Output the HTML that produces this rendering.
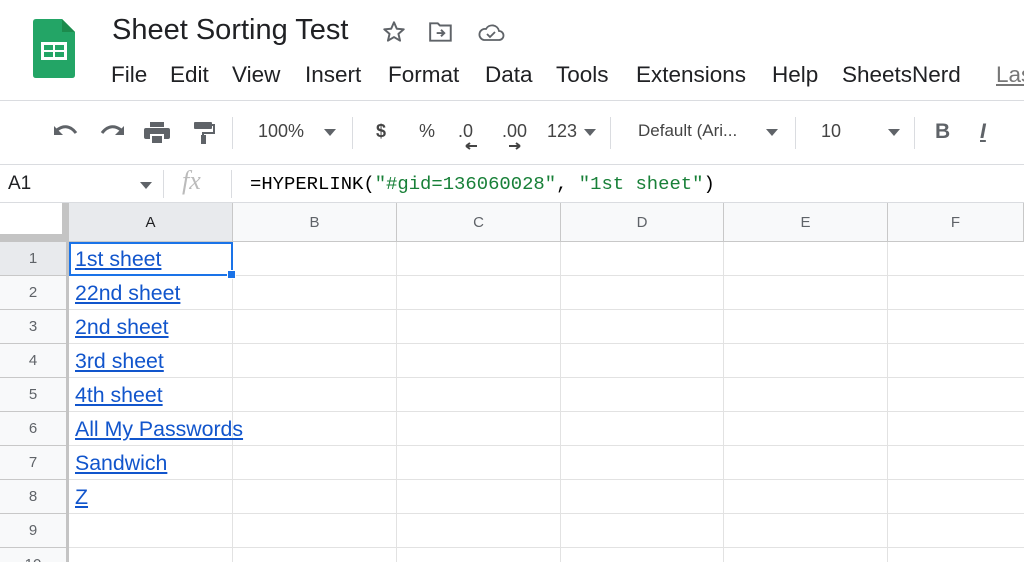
<!DOCTYPE html>
<html><head><meta charset="utf-8"><style>
*{margin:0;padding:0;box-sizing:border-box}
html,body{width:1024px;height:562px;overflow:hidden}
body{background:#fff;font-family:"Liberation Sans",Arial,sans-serif;position:relative;color:#202124}
.a{position:absolute}
.menu span{position:absolute;top:62px;font-size:22.5px;color:#202124}
.tb{color:#5f6368;font-size:18px;position:absolute;top:121px}
.sep{position:absolute;top:117px;width:1px;height:32px;background:#dadce0}
.col{position:absolute;top:203px;height:39px;border-right:1px solid #c8c8c8;border-bottom:1px solid #c8c8c8;background:#f8f9fa;text-align:center;line-height:39px;font-size:15px;color:#5f6368}
.rh{position:absolute;left:0;width:66px;height:34px;border-bottom:1px solid #c8c8c8;background:#f8f9fa;text-align:center;line-height:34px;font-size:15px;color:#5f6368}
.hl{position:absolute;height:1px;background:#e2e2e2;left:69px;right:0}
.vl{position:absolute;width:1px;background:#e2e2e2;top:242px;height:320px}
.lk{position:absolute;left:75px;font-size:21.3px;color:#1155cc;text-decoration:underline;white-space:nowrap}
</style></head><body>
<svg class="a" style="left:32px;top:19px" width="44" height="60" viewBox="0 0 44 60">
<path d="M4 0H30L43 13V56Q43 59 40 59H4Q1 59 1 56V3Q1 0 4 0Z" fill="#23a566"/>
<path d="M30 0V13H43Z" fill="#1c8b4d"/>
<rect x="9" y="23" width="26" height="18" fill="#fff"/>
<rect x="12" y="26" width="9" height="5" fill="#23a566"/><rect x="23" y="26" width="9" height="5" fill="#23a566"/>
<rect x="12" y="33" width="9" height="5" fill="#23a566"/><rect x="23" y="33" width="9" height="5" fill="#23a566"/>
</svg>
<div class="a" style="left:112px;top:14px;font-size:29px;color:#202124">Sheet Sorting Test</div>
<svg class="a" style="left:381px;top:19px" width="26" height="26" viewBox="0 0 24 24"><path d="M12 3l2.6 6 6.4.5-4.9 4.2 1.5 6.3L12 16.7 6.4 20l1.5-6.3L3 9.5 9.4 9Z" fill="none" stroke="#5f6368" stroke-width="1.8" stroke-linejoin="round"/></svg>
<svg class="a" style="left:428px;top:20px" width="26" height="24" viewBox="0 0 24 22"><path d="M2 3h7l2 2h10v14H2Z" fill="none" stroke="#5f6368" stroke-width="1.8"/><path d="M8 12h7M12 9l3 3-3 3" fill="none" stroke="#5f6368" stroke-width="1.8"/></svg>
<svg class="a" style="left:477px;top:22px" width="28" height="22" viewBox="0 0 28 22"><path d="M7 18h15a4.5 4.5 0 0 0 0-9 7 7 0 0 0-13-2A5.5 5.5 0 0 0 7 18Z" fill="none" stroke="#5f6368" stroke-width="1.8"/><path d="M10 12l3 3 5-5" fill="none" stroke="#5f6368" stroke-width="1.8"/></svg>
<div class="menu">
<span style="left:111px">File</span><span style="left:170px">Edit</span><span style="left:232px">View</span><span style="left:305px">Insert</span><span style="left:388px">Format</span><span style="left:485px">Data</span><span style="left:556px">Tools</span><span style="left:636px">Extensions</span><span style="left:772px">Help</span><span style="left:842px">SheetsNerd</span><span style="left:996px;color:#777;text-decoration:underline">Las</span>
</div>
<div class="a" style="left:0;top:100px;width:1024px;height:1px;background:#dadce0"></div>
<svg class="a" style="left:52px;top:122px" width="28" height="20" viewBox="0 0 28 20"><path d="M4 9c6-6 14-6 20 2" fill="none" stroke="#5f6368" stroke-width="3"/><path d="M2 4v9h9Z" fill="#5f6368"/></svg>
<svg class="a" style="left:98px;top:122px" width="28" height="20" viewBox="0 0 28 20"><path d="M24 9c-6-6-14-6-20 2" fill="none" stroke="#5f6368" stroke-width="3"/><path d="M26 4v9h-9Z" fill="#5f6368"/></svg>
<svg class="a" style="left:143px;top:121px" width="28" height="24" viewBox="0 0 28 24"><rect x="7" y="1" width="14" height="5" fill="#5f6368"/><rect x="1" y="7" width="26" height="11" rx="2" fill="#5f6368"/><rect x="7" y="13" width="14" height="10" fill="#fff"/><rect x="9" y="15" width="10" height="7" fill="#5f6368"/></svg>
<svg class="a" style="left:192px;top:121px" width="24" height="24" viewBox="0 0 24 24"><rect x="2" y="1" width="18" height="7" rx="1" fill="#5f6368"/><path d="M20 4h2v8H11v3" fill="none" stroke="#5f6368" stroke-width="2"/><rect x="9" y="14" width="5" height="9" fill="#5f6368"/></svg>
<div class="sep" style="left:232px"></div>
<div class="tb" style="left:258px;color:#444">100%</div>
<svg class="a" style="left:324px;top:129px" width="12" height="7"><path d="M0 0h12L6 7Z" fill="#5f6368"/></svg>
<div class="sep" style="left:352px"></div>
<div class="tb" style="left:376px;color:#444;font-weight:bold">$</div>
<div class="tb" style="left:419px;color:#444">%</div>
<div class="tb" style="left:458px;color:#444">.0</div>
<div class="tb" style="left:502px;color:#444">.00</div>
<svg class="a" style="left:464px;top:141px" width="14" height="10"><path d="M2 5h11M2 5l4-3M2 5l4 3" fill="none" stroke="#444" stroke-width="2"/></svg>
<svg class="a" style="left:508px;top:141px" width="14" height="10"><path d="M1 5h11M12 5l-4-3M12 5l-4 3" fill="none" stroke="#444" stroke-width="2"/></svg>
<div class="tb" style="left:547px;color:#444">123</div>
<svg class="a" style="left:584px;top:129px" width="12" height="7"><path d="M0 0h12L6 7Z" fill="#5f6368"/></svg>
<div class="sep" style="left:610px"></div>
<div class="tb" style="left:638px;color:#444;font-size:17px">Default (Ari...</div>
<svg class="a" style="left:766px;top:129px" width="12" height="7"><path d="M0 0h12L6 7Z" fill="#5f6368"/></svg>
<div class="sep" style="left:795px"></div>
<div class="tb" style="left:821px;color:#444">10</div>
<svg class="a" style="left:888px;top:129px" width="12" height="7"><path d="M0 0h12L6 7Z" fill="#5f6368"/></svg>
<div class="sep" style="left:914px"></div>
<div class="tb" style="left:935px;font-weight:bold;font-size:21px;top:120px">B</div>
<div class="tb" style="left:980px;font-weight:bold;font-style:italic;font-size:21px;top:120px;text-decoration:underline">I</div>
<div class="a" style="left:0;top:164px;width:1024px;height:1px;background:#dadce0"></div>
<div class="a" style="left:8px;top:173px;font-size:19px;color:#202124">A1</div>
<svg class="a" style="left:140px;top:182px" width="12" height="7"><path d="M0 0h12L6 7Z" fill="#5f6368"/></svg>
<div class="a" style="left:163px;top:170px;width:1px;height:28px;background:#dadce0"></div>
<div class="a" style="left:182px;top:166px;font-size:26px;font-style:italic;font-family:'Liberation Serif',serif;color:#bbb">fx</div>
<div class="a" style="left:231px;top:170px;width:1px;height:28px;background:#dadce0"></div>
<div class="a" style="left:250px;top:173px;font-size:18.9px;font-family:'Liberation Mono',monospace;color:#000;white-space:nowrap">=HYPERLINK(<span style="color:#188038">"#gid=136060028"</span>, <span style="color:#188038">"1st sheet"</span>)</div>
<div class="a" style="left:0;top:202px;width:1024px;height:1px;background:#dadce0"></div>
<div class="a" style="left:0;top:203px;width:69px;height:39px;background:#fff"></div>
<div class="a" style="left:62px;top:203px;width:7px;height:39px;background:#c4c4c4"></div>
<div class="a" style="left:0;top:234px;width:69px;height:8px;background:#c4c4c4"></div>
<div class="col" style="left:69px;width:164px;background:#e8eaed;color:#202124">A</div>
<div class="col" style="left:233px;width:164px">B</div>
<div class="col" style="left:397px;width:164px">C</div>
<div class="col" style="left:561px;width:163px">D</div>
<div class="col" style="left:724px;width:164px">E</div>
<div class="col" style="left:888px;width:136px">F</div>
<div class="a" style="left:66px;top:242px;width:3px;height:320px;background:#c4c4c4"></div>
<div class="rh" style="top:242px;background:#e8eaed">1</div>
<div class="rh" style="top:276px">2</div>
<div class="rh" style="top:310px">3</div>
<div class="rh" style="top:344px">4</div>
<div class="rh" style="top:378px">5</div>
<div class="rh" style="top:412px">6</div>
<div class="rh" style="top:446px">7</div>
<div class="rh" style="top:480px">8</div>
<div class="rh" style="top:514px">9</div>
<div class="rh" style="top:548px;height:14px;border:none">10</div>
<div class="hl" style="top:275px"></div><div class="hl" style="top:309px"></div><div class="hl" style="top:343px"></div><div class="hl" style="top:377px"></div><div class="hl" style="top:411px"></div><div class="hl" style="top:445px"></div><div class="hl" style="top:479px"></div><div class="hl" style="top:513px"></div><div class="hl" style="top:547px"></div>
<div class="vl" style="left:232px"></div><div class="vl" style="left:396px"></div><div class="vl" style="left:560px"></div><div class="vl" style="left:723px"></div><div class="vl" style="left:887px"></div>
<div class="a" style="left:233px;top:412px;width:20px;height:33px;background:#fff"></div>
<div class="lk" style="top:247px">1st sheet</div>
<div class="lk" style="top:281px">22nd sheet</div>
<div class="lk" style="top:315px">2nd sheet</div>
<div class="lk" style="top:349px">3rd sheet</div>
<div class="lk" style="top:383px">4th sheet</div>
<div class="lk" style="top:417px">All My Passwords</div>
<div class="lk" style="top:451px">Sandwich</div>
<div class="lk" style="top:485px">Z</div>
<div class="a" style="left:69px;top:242px;width:164px;height:34px;border:2px solid #1a73e8"></div>
<div class="a" style="left:227px;top:270px;width:9px;height:9px;background:#1a73e8;border:1px solid #fff"></div>
</body></html>
